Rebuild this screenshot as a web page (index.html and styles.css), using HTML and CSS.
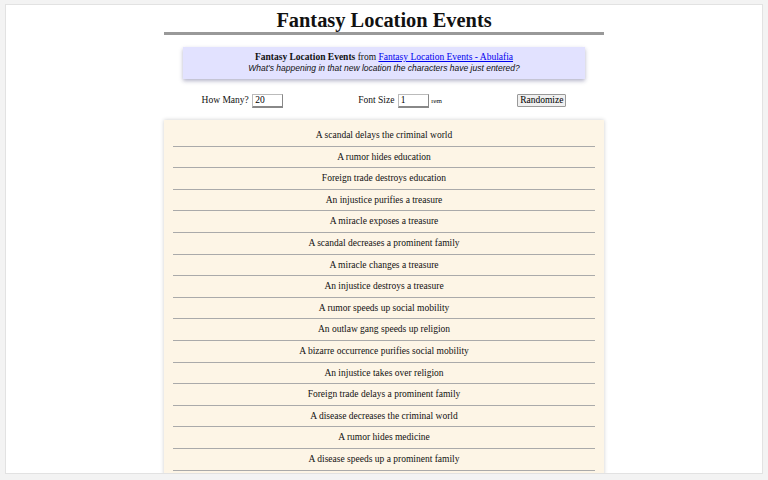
FILE: index.html
```html
<!DOCTYPE html>
<html lang="en">
<head>
    <meta charset="UTF-8">
    <meta name="viewport" content="width=device-width, initial-scale=1.0">
    <title>Fantasy Location Events</title>
    <link rel="stylesheet" href="styles.css">
</head>
<body>

<div class="frame">
    <div class="page">
        <h1 class="title">Fantasy Location Events</h1>

        <div class="source">
            <div><b>Fantasy Location Events</b> from <a href="#">Fantasy Location Events - Abulafia</a></div>
            <div class="tagline">What's happening in that new location the characters have just entered?</div>
        </div>

        <div class="controls">
            <label>How Many? <input type="text" id="count" value="20"></label>
            <label>Font Size <input type="text" id="size" value="1"> <small>rem</small></label>
            <button onclick="randomize()">Randomize</button>
        </div>

        <div class="results" id="results">
            <div class="item">A scandal delays the criminal world</div>
            <div class="item">A rumor hides education</div>
            <div class="item">Foreign trade destroys education</div>
            <div class="item">An injustice purifies a treasure</div>
            <div class="item">A miracle exposes a treasure</div>
            <div class="item">A scandal decreases a prominent family</div>
            <div class="item">A miracle changes a treasure</div>
            <div class="item">An injustice destroys a treasure</div>
            <div class="item">A rumor speeds up social mobility</div>
            <div class="item">An outlaw gang speeds up religion</div>
            <div class="item">A bizarre occurrence purifies social mobility</div>
            <div class="item">An injustice takes over religion</div>
            <div class="item">Foreign trade delays a prominent family</div>
            <div class="item">A disease decreases the criminal world</div>
            <div class="item">A rumor hides medicine</div>
            <div class="item">A disease speeds up a prominent family</div>
        </div>
    </div>
</div>

<script>
    let subjects = ['A scandal', 'A rumor', 'Foreign trade', 'An injustice', 'A miracle', 'A disease', 'An outlaw gang', 'A bizarre occurrence'];
    let verbs = ['delays', 'hides', 'destroys', 'purifies', 'exposes', 'decreases', 'changes', 'speeds up', 'takes over'];
    let objects = ['the criminal world', 'education', 'a treasure', 'a prominent family', 'social mobility', 'religion', 'medicine'];

    function pick(list) {
        return list[Math.floor(Math.random() * list.length)];
    }

    // Fill the list with new random events
    function randomize() {
        let results = document.getElementById('results');
        let count = parseInt(document.getElementById('count').value) || 1;
        let size = document.getElementById('size').value || 1;
        results.innerHTML = '';
        for (let i = 0; i < count; i++) {
            let item = document.createElement('div');
            item.classList.add('item');
            item.style.fontSize = size + 'em';
            item.textContent = pick(subjects) + ' ' + pick(verbs) + ' ' + pick(objects);
            results.appendChild(item);
        }
    }
</script>

</body>
</html>
```

FILE: styles.css
```css
body {
    margin: 0;
    padding: 4px 5px 4px 5px;
    background-color: #f3f3f3;
    font-family: "Liberation Serif", "Times New Roman", serif;
    font-size: 9.5px;
    color: #111;
}
.frame {
    height: 470px;
    box-sizing: border-box;
    background-color: #fff;
    border: 1px solid #e2e2e2;
    overflow: hidden;
}
.page {
    width: 440px;
    margin: 0 auto;
}
.title {
    margin: 4px 0 0 0;
    font-size: 20.4px;
    line-height: 23px;
    text-align: center;
    border-bottom: 3px solid #999;
}
.source {
    margin: 12px 19px 0 19px;
    padding: 5px 4px;
    background-color: #e2e2ff;
    box-shadow: 0 2px 4px rgba(40, 40, 100, 0.35);
    text-align: center;
    line-height: 11px;
}
.source a {
    color: #0000ee;
}
.tagline {
    font-family: "Liberation Sans", Arial, sans-serif;
    font-style: italic;
    font-size: 8.5px;
}
.controls {
    display: flex;
    justify-content: space-around;
    align-items: center;
    margin-top: 14px;
    height: 15px;
}
.controls input {
    width: 25px;
    height: 9px;
    margin-left: 1px;
    padding: 1px 2px;
    font-family: inherit;
    font-size: 9.5px;
    border: 1px solid #888;
    border-top-color: #bbb;
    border-left-color: #bbb;
    border-bottom-width: 2px;
    vertical-align: middle;
}
.controls small {
    font-size: 7px;
}
.controls button {
    font-family: inherit;
    font-size: 9.5px;
    padding: 0 2px 1px 2px;
    background-color: #f0f0f0;
    border: 1px solid #999;
    border-radius: 1px;
}
.results {
    margin-top: 12px;
    padding: 5px 9px;
    background-color: #fdf5e6;
    box-shadow: 0 0 4px rgba(0, 0, 0, 0.2);
}
.item {
    text-align: center;
    line-height: 20.6px;
    border-bottom: 1px solid #aaa;
}
```
